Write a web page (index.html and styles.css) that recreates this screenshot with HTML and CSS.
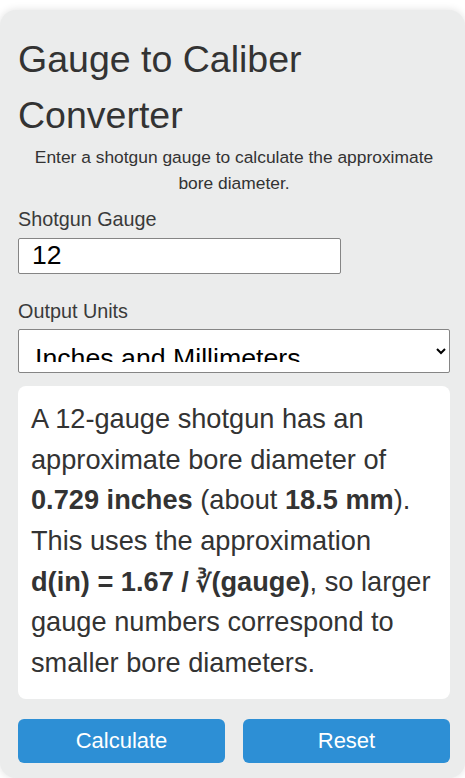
FILE: index.html
```html
<!DOCTYPE html>
<html lang="en">
<head>
<meta charset="utf-8">
<title>Gauge to Caliber Converter</title>
<link rel="stylesheet" href="styles.css">
</head>
<body>
<main class="card">
  <h1 class="title">Gauge to Caliber Converter</h1>
  <p class="subtitle">Enter a shotgun gauge to calculate the approximate bore diameter.</p>
  <label class="label label-first" for="gauge">Shotgun Gauge</label>
  <input class="gauge-input" id="gauge" type="text" value="12">
  <label class="label label-second" for="units">Output Units</label>
  <select class="units-select" id="units">
    <option>Inches and Millimeters</option>
    <option>Inches</option>
    <option>Millimeters</option>
  </select>
  <div class="result">A 12-gauge shotgun has an approximate bore diameter of <strong>0.729 inches</strong> (about <strong>18.5 mm</strong>). This uses the approximation <strong>d(in) = 1.67 / <span class="root">∛</span>(gauge)</strong>, so larger gauge numbers correspond to smaller bore diameters.</div>
  <div class="actions">
    <button class="btn" type="button">Calculate</button>
    <button class="btn" type="button">Reset</button>
  </div>
</main>
</body>
</html>
```

FILE: styles.css
```css
html, body {
  margin: 0;
  padding: 0;
  background: #ffffff;
}

body {
  font-family: "Liberation Sans", Arial, sans-serif;
  color: #333333;
  padding-top: 10px;
}

.card {
  display: block;
  background: #ebecec;
  border-radius: 16px;
  box-shadow: 0 0 8px rgba(0, 0, 0, 0.12);
  padding: 21px 15px 15px 18px;
}

.title {
  margin: 0;
  font-size: 37.5px;
  line-height: 56px;
  font-weight: normal;
  color: #333333;
}

.subtitle {
  margin: 2px 0 0;
  font-size: 17.4px;
  line-height: 25.5px;
  text-align: center;
  color: #333333;
}

.label {
  display: block;
  font-size: 19.8px;
  line-height: 29.7px;
  color: #3a3a3a;
}

.label-first {
  margin-top: 8.5px;
}

.label-second {
  margin-top: 23px;
}

.gauge-input {
  display: block;
  box-sizing: border-box;
  margin-top: 3.5px;
  width: 323px;
  height: 36px;
  padding: 0 13px;
  border: 1px solid #858585;
  border-radius: 2px;
  background: #ffffff;
  font-family: "Liberation Sans", Arial, sans-serif;
  font-size: 26.5px;
  color: #000000;
}

.units-select {
  display: block;
  box-sizing: border-box;
  margin-top: 2.5px;
  width: 100%;
  height: 44px;
  padding: 12px 10px 10px 12px;
  border: 1px solid #858585;
  border-radius: 2px;
  background: #ffffff;
  font-family: "Liberation Sans", Arial, sans-serif;
  font-size: 26.7px;
  color: #000000;
}

.result {
  margin-top: 13px;
  background: #ffffff;
  border-radius: 8px;
  padding: 13px 13px 15px;
  font-size: 27.2px;
  line-height: 40.7px;
  color: #333333;
}

.result strong {
  font-weight: bold;
}

.root {
  font-size: 0.9em;
  line-height: 1;
}

.actions {
  margin-top: 20px;
  display: grid;
  grid-template-columns: 1fr 1fr;
  gap: 18px;
}

.btn {
  height: 44px;
  border: none;
  border-radius: 6px;
  background: #2d8fd5;
  color: #ffffff;
  font-family: "Liberation Sans", Arial, sans-serif;
  font-size: 22px;
  cursor: pointer;
}
```
